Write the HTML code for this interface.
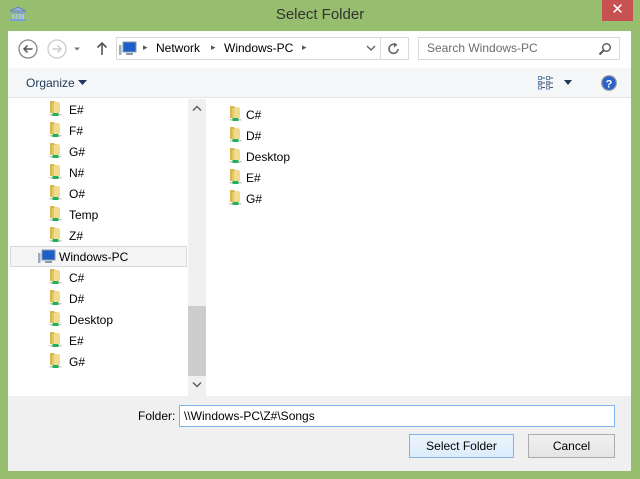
<!DOCTYPE html><html><head><style>
*{margin:0;padding:0;box-sizing:border-box}
body{width:640px;height:479px;background:#97bd6e;position:relative;overflow:hidden;font-family:"Liberation Sans",sans-serif;font-size:12px;color:#000}
.a{position:absolute}
.t{white-space:nowrap}
.fi{position:absolute;width:13px;height:17px}
</style></head><body>
<svg class="a" style="left:9px;top:6px" width="18" height="16" viewBox="0 0 18 16"><path d="M9 1L1 5H17Z" fill="#8fb0dd" stroke="#5a7fb8" stroke-width=".8"/><rect x="2" y="6" width="14" height="1.5" fill="#7a9fd4"/><g fill="#a8c4ea"><rect x="3" y="8" width="2" height="5"/><rect x="6.5" y="8" width="2" height="5"/><rect x="10" y="8" width="2" height="5"/><rect x="13" y="8" width="2" height="5"/></g><rect x="1" y="13" width="16" height="2" fill="#7a9fd4"/></svg>
<div class="a t" style="left:0;width:640px;top:6px;text-align:center;font-size:15px;color:#333">Select Folder</div>
<div class="a" style="left:602px;top:0;width:31px;height:21px;background:#c75050;color:#fff;text-align:center;font-size:15px;line-height:20px">✕</div>
<div class="a" style="left:8px;top:31px;width:623px;height:440px;background:#fff"></div>
<svg class="a" style="left:17px;top:38px" width="80" height="22" viewBox="0 0 80 22"><circle cx="11" cy="11" r="9" fill="none" stroke="#888" stroke-width="1.3"/><path d="M15.5 11H7M10.5 7.5L7 11L10.5 14.5" fill="none" stroke="#555" stroke-width="1.5"/><circle cx="40" cy="11" r="9" fill="none" stroke="#ccc" stroke-width="1.3"/><path d="M35.5 11H44M40.5 7.5L44 11L40.5 14.5" fill="none" stroke="#ccc" stroke-width="1.5"/><path d="M57 9.5H63L60 12.5Z" fill="#777"/></svg>
<svg class="a" style="left:96px;top:41px" width="12" height="16" viewBox="0 0 12 16"><path d="M6 14V2M1.5 6.5L6 2L10.5 6.5" fill="none" stroke="#555" stroke-width="1.6"/></svg>
<div class="a" style="left:116px;top:37px;width:293px;height:23px;border:1px solid #d9d9d9"></div>
<div class="a" style="left:380px;top:37px;width:1px;height:23px;background:#d9d9d9"></div>
<svg class="a" style="left:119px;top:41px" width="18" height="16" viewBox="0 0 18 16"><rect x="0" y="4" width="2.5" height="10" fill="#9ab"/><rect x="4" y="1" width="13" height="10" fill="#1b5fc8" stroke="#8a99a8"/><rect x="7" y="12" width="7" height="2" fill="#8a99a8"/></svg>
<div class="a t" style="left:143px;top:42px;font-size:9px;color:#555">▸</div>
<div class="a t" style="left:156px;top:41px">Network</div>
<div class="a t" style="left:211px;top:42px;font-size:9px;color:#555">▸</div>
<div class="a t" style="left:224px;top:41px">Windows-PC</div>
<div class="a t" style="left:302px;top:42px;font-size:9px;color:#555">▸</div>
<svg class="a" style="left:366px;top:44px" width="10" height="8"><path d="M1 2L5 6L9 2" fill="none" stroke="#666" stroke-width="1.4"/></svg>
<svg class="a" style="left:386px;top:41px" width="16" height="16" viewBox="0 0 16 16"><path d="M12 8A4.5 4.5 0 1 1 9.5 3.8" fill="none" stroke="#666" stroke-width="1.6"/><path d="M8 1.5L11.5 3.8L8 6.5Z" fill="#666"/></svg>
<div class="a" style="left:418px;top:37px;width:202px;height:23px;border:1px solid #d9d9d9"></div>
<div class="a t" style="left:427px;top:41px;color:#6d6d6d">Search Windows-PC</div>
<svg class="a" style="left:598px;top:42px" width="14" height="14" viewBox="0 0 14 14"><circle cx="8.5" cy="5.5" r="3.8" fill="none" stroke="#555" stroke-width="1.4"/><path d="M5.8 8.2L1.5 12.5" stroke="#555" stroke-width="2"/></svg>
<div class="a" style="left:8px;top:68px;width:623px;height:30px;background:#f5f6f7;border-bottom:1px solid #e5e5e5"></div>
<div class="a t" style="left:26px;top:76px;color:#1e395b">Organize</div>
<svg class="a" style="left:78px;top:80px" width="9" height="5"><path d="M0 0H9L4.5 5Z" fill="#1e395b"/></svg>
<svg class="a" style="left:538px;top:76px" width="16" height="14" viewBox="0 0 16 14"><g fill="none" stroke="#6a8cb8"><rect x=".5" y=".5" width="3" height="3"/><rect x=".5" y="5.5" width="3" height="3"/><rect x=".5" y="10" width="3" height="3"/><rect x="8.5" y=".5" width="3" height="3"/><rect x="8.5" y="5.5" width="3" height="3"/><rect x="8.5" y="10" width="3" height="3"/></g><path d="M4 2H7M4 7H7M4 11.5H7M12 2H15M12 7H15M12 11.5H15" stroke="#555"/><rect x="1.5" y="6.5" width="1" height="1" fill="#d00"/><rect x="9.5" y="6.5" width="1" height="1" fill="#d00"/></svg>
<svg class="a" style="left:564px;top:80px" width="8" height="5"><path d="M0 0H8L4 5Z" fill="#1e395b"/></svg>
<svg class="a" style="left:601px;top:75px" width="16" height="16" viewBox="0 0 16 16"><circle cx="8" cy="8" r="7.3" fill="#2a62c9" stroke="#999" stroke-width="1.2"/><text x="8" y="12.3" font-size="11" font-weight="bold" fill="#fff" text-anchor="middle" font-family="Liberation Sans">?</text></svg>
<div class="a" style="left:188px;top:99px;width:18px;height:297px;background:#f0f0f0"></div>
<div class="a" style="left:188px;top:306px;width:18px;height:70px;background:#cdcdcd"></div>
<svg class="a" style="left:192px;top:105px" width="10" height="7"><path d="M1 5.5L5 1.5L9 5.5" fill="none" stroke="#606060" stroke-width="1.5"/></svg>
<svg class="a" style="left:192px;top:381px" width="10" height="7"><path d="M1 1.5L5 5.5L9 1.5" fill="none" stroke="#606060" stroke-width="1.5"/></svg>
<div class="a" style="left:10px;top:246px;width:177px;height:21px;border:1px solid #d9d9d9;background:#f5f5f5"></div>
<svg class="a" style="left:38px;top:249px" width="18" height="16" viewBox="0 0 18 16"><rect x="0" y="4" width="2.5" height="10" fill="#9ab"/><rect x="4" y="1" width="13" height="10" fill="#1b5fc8" stroke="#8a99a8"/><rect x="7" y="12" width="7" height="2" fill="#8a99a8"/></svg>
<div class="a t" style="left:59px;top:250px">Windows-PC</div>
<div id="tree"></div>
<div class="a" style="left:8px;top:396px;width:623px;height:75px;background:#f0f0f0"></div>
<div class="a t" style="left:138px;top:409px">Folder:</div>
<div class="a" style="left:179px;top:405px;width:436px;height:22px;border:1px solid #7eb4ea;background:#fff"></div>
<div class="a t" style="left:184px;top:409px">\\Windows-PC\Z#\Songs</div>
<div class="a" style="left:409px;top:434px;width:105px;height:24px;border:1px solid #7eb4ea;background:linear-gradient(#ecf4fc,#dcecfc);text-align:center;line-height:22px">Select Folder</div>
<div class="a" style="left:528px;top:434px;width:87px;height:24px;border:1px solid #acacac;background:linear-gradient(#f0f0f0,#e5e5e5);text-align:center;line-height:22px">Cancel</div>
<script>
var fold='<svg class="fi" viewBox="0 0 13 17"><path d="M1 1H5L6 2.5H10V13H1Z" fill="#d9b64e"/><path d="M3 3H11V13H3Z" fill="#f0dc8c"/><path d="M3 3H5V13H3Z" fill="#e4c866"/><rect x="0.5" y="14" width="12" height="1.5" fill="#c8c8c8"/><rect x="3.5" y="13" width="6" height="3" fill="#21b257"/></svg>';
var h='';
function add(x,tx,y,n){h+='<div class="a" style="left:'+x+'px;top:'+(y-3)+'px">'+fold+'</div><div class="a t" style="left:'+tx+'px;top:'+y+'px">'+n+'</div>';}
["E#","F#","G#","N#","O#","Temp","Z#"].forEach(function(n,i){add(49,69,103+i*21,n)});
["C#","D#","Desktop","E#","G#"].forEach(function(n,i){add(49,69,271+i*21,n)});
["C#","D#","Desktop","E#","G#"].forEach(function(n,i){add(229,246,108+i*21,n)});
document.getElementById('tree').outerHTML=h;
</script>
</body></html>
